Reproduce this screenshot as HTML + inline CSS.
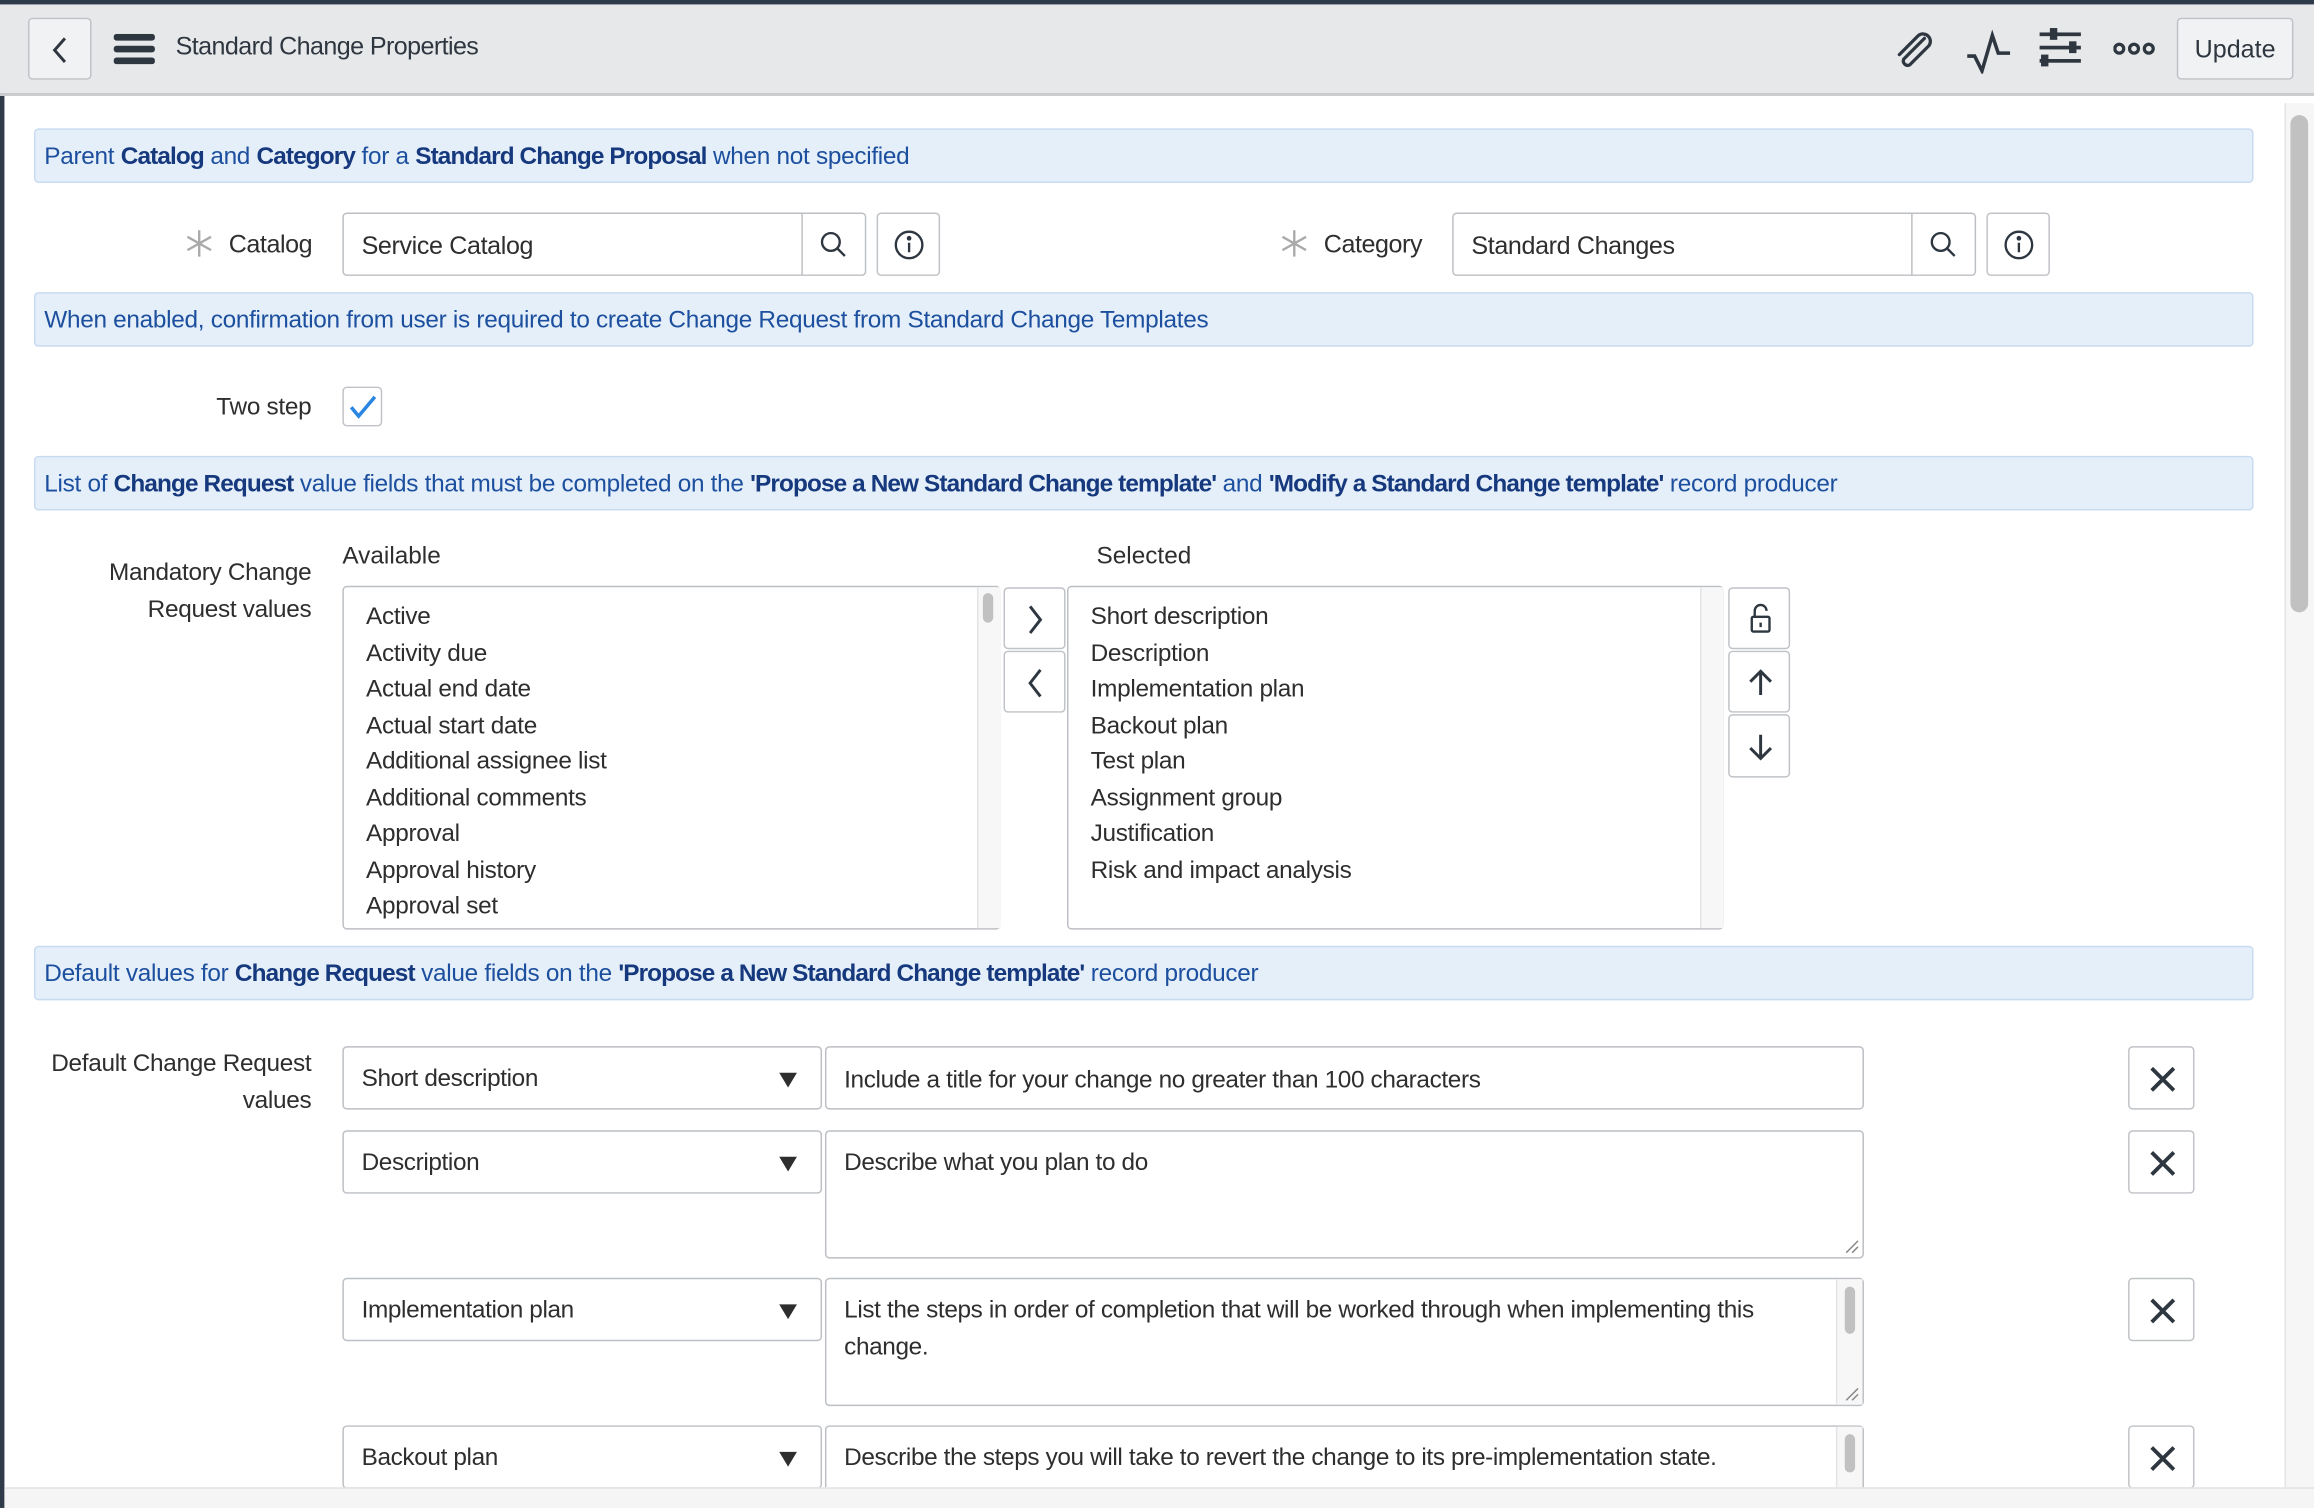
<!DOCTYPE html>
<html><head><meta charset="utf-8"><style>
html,body{margin:0;padding:0;background:#fff;overflow:hidden}
body{width:2314px;height:1508px;position:relative}
#w{position:absolute;left:0;top:0;width:1568px;height:1022px;transform:scale(1.4758,1.4755);transform-origin:0 0;font-family:"Liberation Sans",sans-serif;color:#2e2e2e;font-size:16px}
.a{position:absolute}
.hdr{left:0;top:0;width:1568px;height:65px;background:#e6e8ea;border-bottom:2px solid #c9cbce;border-top:3px solid #2f3b4a;box-sizing:border-box}
.btn{position:absolute;box-sizing:border-box;border:1px solid #bfc2c6;border-radius:3px;background:#fff}
.bar{left:23px;width:1504px;height:37px;background:#e5effa;border:1px solid #c8dbf1;border-radius:3px;box-sizing:border-box;color:#1c4f9e;font-size:16.5px;line-height:37px;padding-left:6px;letter-spacing:-0.2px;white-space:nowrap}
.bar b{color:#16397e;font-weight:bold;letter-spacing:-0.6px}
.lbl{text-align:right;width:200px;left:11px;letter-spacing:-0.2px}
.inp{position:absolute;box-sizing:border-box;border:1px solid #bcbfc3;border-radius:3px;background:#fff;letter-spacing:-0.25px}
.li{position:absolute;left:15px;letter-spacing:-0.2px}
svg{position:absolute}
.tri{position:absolute;right:16px;top:17px;width:0;height:0;border-left:6px solid transparent;border-right:6px solid transparent;border-top:10px solid #2e2e2e}
</style></head><body><div id="w">
<div class="a" style="left:0;top:0;width:3px;height:1022px;background:#2f3b4a"></div>
<div class="a hdr"></div>
<div class="btn" style="left:19px;top:12px;width:43px;height:42px;background:#f1f2f3"><svg width="43" height="42"><path d="M24 13l-7 8 7 8" fill="none" stroke="#2e3640" stroke-width="2"/></svg></div>
<svg style="left:77px;top:23px" width="28" height="21"><rect x="0" y="0" width="28" height="4.5" rx="2" fill="#2e3640"/><rect x="0" y="8" width="28" height="4.5" rx="2" fill="#2e3640"/><rect x="0" y="16" width="28" height="4.5" rx="2" fill="#2e3640"/></svg>
<div class="a" style="left:119px;top:22px;font-size:17px;letter-spacing:-0.4px;color:#2e3640">Standard Change Properties</div>
<svg style="left:1280px;top:18px" width="32" height="32" fill="none" stroke="#2e3640" stroke-width="2.2" stroke-linecap="round"><path d="M24 8L10 22a3 3 0 0 0 4 4L27 13a5 5 0 0 0-7-7L7 19"/></svg>
<svg style="left:1331px;top:18px" width="34" height="32" fill="none" stroke="#2e3640" stroke-width="2.4"><path d="M2 20h5l5 10 7-24 4 12h8"/></svg>
<svg style="left:1382px;top:18px" width="30" height="30" fill="#2e3640"><rect x="0" y="4" width="28" height="2.5"/><rect x="0" y="13" width="28" height="2.5"/><rect x="0" y="22" width="28" height="2.5"/><rect x="7" y="1" width="5" height="8"/><rect x="20" y="10" width="5" height="8"/><rect x="1" y="19" width="5" height="8"/></svg>
<svg style="left:1432px;top:27px" width="30" height="12" fill="none" stroke="#2e3640" stroke-width="2.2"><circle cx="4" cy="6" r="3"/><circle cx="14" cy="6" r="3"/><circle cx="24" cy="6" r="3"/></svg>
<div class="btn" style="left:1475px;top:12px;width:79px;height:42px;background:#f1f2f3;font-size:17px;line-height:42px;text-align:center;color:#2e3640">Update</div>
<div class="a" style="left:1548px;top:70px;width:20px;height:940px;background:#f6f6f6;border-left:1px solid #e4e4e4"></div>
<div class="a" style="left:1552px;top:78px;width:12px;height:337px;background:#c1c1c1;border-radius:6px"></div>

<div class="a bar" style="top:87px">Parent <b>Catalog</b> and <b>Category</b> for a <b>Standard Change Proposal</b> when not specified</div>
<svg style="left:126px;top:156px" width="18" height="18" stroke="#aaa" stroke-width="1.6"><path d="M9 0v18M1 4.5l16 9M1 13.5l16-9"/></svg>
<div class="a" style="left:155px;top:156px;font-size:17px;letter-spacing:-0.3px">Catalog</div>
<div class="inp" style="left:232px;top:144px;width:355px;height:43px"><span style="position:absolute;left:12px;top:12px;font-size:17px">Service Catalog</span><div class="a" style="left:310px;top:0;width:1px;height:41px;background:#bcbfc3"></div><svg style="left:322px;top:11px" width="20" height="20" fill="none" stroke="#2e3640" stroke-width="1.6"><circle cx="8" cy="8" r="6"/><path d="M12.5 12.5l5 5"/></svg></div>
<div class="btn" style="left:594px;top:144px;width:43px;height:43px"><svg style="left:10px;top:10px" width="22" height="22" fill="none" stroke="#2e3640" stroke-width="1.6"><circle cx="11" cy="11" r="9"/><path d="M11 9.5v6.5"/><circle cx="11" cy="6.5" r="0.8" fill="#2e3640"/></svg></div>
<svg style="left:868px;top:156px" width="18" height="18" stroke="#aaa" stroke-width="1.6"><path d="M9 0v18M1 4.5l16 9M1 13.5l16-9"/></svg>
<div class="a" style="left:897px;top:156px;font-size:17px;letter-spacing:-0.3px">Category</div>
<div class="inp" style="left:984px;top:144px;width:355px;height:43px"><span style="position:absolute;left:12px;top:12px;font-size:17px">Standard Changes</span><div class="a" style="left:310px;top:0;width:1px;height:41px;background:#bcbfc3"></div><svg style="left:322px;top:11px" width="20" height="20" fill="none" stroke="#2e3640" stroke-width="1.6"><circle cx="8" cy="8" r="6"/><path d="M12.5 12.5l5 5"/></svg></div>
<div class="btn" style="left:1346px;top:144px;width:43px;height:43px"><svg style="left:10px;top:10px" width="22" height="22" fill="none" stroke="#2e3640" stroke-width="1.6"><circle cx="11" cy="11" r="9"/><path d="M11 9.5v6.5"/><circle cx="11" cy="6.5" r="0.8" fill="#2e3640"/></svg></div>

<div class="a bar" style="top:198px">When enabled, confirmation from user is required to create Change Request from Standard Change Templates</div>
<div class="a lbl" style="top:267px;font-size:16.5px">Two step</div>
<div class="btn" style="left:232px;top:262px;width:27px;height:27px"><svg width="27" height="27" fill="none" stroke="#2a86e0" stroke-width="2.4"><path d="M5 13l5 6 11-13"/></svg></div>

<div class="a bar" style="top:309px">List of <b>Change Request</b> value fields that must be completed on the <b>'Propose a New Standard Change template'</b> and <b>'Modify a Standard Change template'</b> record producer</div>
<div class="a lbl" style="top:376px;line-height:24.5px;font-size:16.5px">Mandatory Change<br>Request values</div>
<div class="a" style="left:232px;top:368px;font-size:16.5px">Available</div>
<div class="a" style="left:743px;top:368px;font-size:16.5px">Selected</div>
<div class="inp" style="left:232px;top:397px;width:446px;height:233px;font-size:16.5px">
<div class="a" style="left:429px;top:0;width:15px;height:231px;background:#f7f7f7;border-left:1px solid #e4e4e4"></div>
<div class="a" style="left:433px;top:4px;width:7px;height:20px;background:#c1c1c1;border-radius:4px"></div>
<div class="li" style="top:11px">Active</div><div class="li" style="top:35.5px">Activity due</div><div class="li" style="top:60px">Actual end date</div><div class="li" style="top:84.5px">Actual start date</div><div class="li" style="top:109px">Additional assignee list</div><div class="li" style="top:133.5px">Additional comments</div><div class="li" style="top:158px">Approval</div><div class="li" style="top:182.5px">Approval history</div><div class="li" style="top:207px">Approval set</div>
</div>
<div class="btn" style="left:680px;top:398px;width:42px;height:42px"><svg width="42" height="42" fill="none" stroke="#2e3640" stroke-width="2"><path d="M17 12l7 9-7 9"/></svg></div>
<div class="btn" style="left:680px;top:441px;width:42px;height:42px"><svg width="42" height="42" fill="none" stroke="#2e3640" stroke-width="2"><path d="M24 12l-7 9 7 9"/></svg></div>
<div class="inp" style="left:723px;top:397px;width:445px;height:233px;font-size:16.5px">
<div class="a" style="left:428px;top:0;width:15px;height:231px;background:#f7f7f7;border-left:1px solid #e4e4e4"></div>
<div class="li" style="top:11px">Short description</div><div class="li" style="top:35.5px">Description</div><div class="li" style="top:60px">Implementation plan</div><div class="li" style="top:84.5px">Backout plan</div><div class="li" style="top:109px">Test plan</div><div class="li" style="top:133.5px">Assignment group</div><div class="li" style="top:158px">Justification</div><div class="li" style="top:182.5px">Risk and impact analysis</div>
</div>
<div class="btn" style="left:1171px;top:398px;width:42px;height:42px"><svg width="42" height="42" fill="none" stroke="#2e3640" stroke-width="1.6"><rect x="15" y="19" width="12" height="10" rx="1"/><path d="M17 19v-4a4 4 0 0 1 8 0"/><path d="M21 23v3"/></svg></div>
<div class="btn" style="left:1171px;top:441px;width:42px;height:42px"><svg width="42" height="42" fill="none" stroke="#2e3640" stroke-width="2"><path d="M21 29V13M14 20l7-7 7 7"/></svg></div>
<div class="btn" style="left:1171px;top:484px;width:42px;height:43px"><svg width="42" height="42" fill="none" stroke="#2e3640" stroke-width="2"><path d="M21 13v16M14 22l7 7 7-7"/></svg></div>

<div class="a bar" style="top:641px">Default values for <b>Change Request</b> value fields on the <b>'Propose a New Standard Change template'</b> record producer</div>
<div class="a lbl" style="top:709px;line-height:24.5px;font-size:16.5px">Default Change Request<br>values</div>

<div class="inp" style="left:232px;top:709px;width:325px;height:43px;font-size:16.5px"><span class="a" style="left:12px;top:12px">Short description</span><div class="tri"></div></div>
<div class="inp" style="left:559px;top:709px;width:704px;height:43px;font-size:16.5px"><span class="a" style="left:12px;top:13px">Include a title for your change no greater than 100 characters</span></div>
<div class="btn" style="left:1442px;top:709px;width:45px;height:43px"><svg width="45" height="43" stroke="#2e3640" stroke-width="2.6"><path d="M15 14l15 15M30 14L15 29"/></svg></div>

<div class="inp" style="left:232px;top:766px;width:325px;height:43px;font-size:16.5px"><span class="a" style="left:12px;top:12px">Description</span><div class="tri"></div></div>
<div class="inp" style="left:559px;top:766px;width:704px;height:87px;font-size:16.5px"><span class="a" style="left:12px;top:12px">Describe what you plan to do</span><svg style="right:2px;bottom:2px" width="10" height="10" stroke="#888"><path d="M9 1L1 9M9 5L5 9"/></svg></div>
<div class="btn" style="left:1442px;top:766px;width:45px;height:43px"><svg width="45" height="43" stroke="#2e3640" stroke-width="2.6"><path d="M15 14l15 15M30 14L15 29"/></svg></div>

<div class="inp" style="left:232px;top:866px;width:325px;height:43px;font-size:16.5px"><span class="a" style="left:12px;top:12px">Implementation plan</span><div class="tri"></div></div>
<div class="inp" style="left:559px;top:866px;width:704px;height:87px;font-size:16.5px;line-height:24.5px"><span class="a" style="left:12px;top:9px;width:660px">List the steps in order of completion that will be worked through when implementing this change.</span><div class="a" style="right:0;top:0;width:17px;height:85px;background:#f7f7f7;border-left:1px solid #e4e4e4"></div><div class="a" style="right:5px;top:5px;width:7px;height:32px;background:#c1c1c1;border-radius:4px"></div><svg style="right:2px;bottom:2px" width="10" height="10" stroke="#888"><path d="M9 1L1 9M9 5L5 9"/></svg></div>
<div class="btn" style="left:1442px;top:866px;width:45px;height:43px"><svg width="45" height="43" stroke="#2e3640" stroke-width="2.6"><path d="M15 14l15 15M30 14L15 29"/></svg></div>

<div class="inp" style="left:232px;top:966px;width:325px;height:43px;font-size:16.5px"><span class="a" style="left:12px;top:12px">Backout plan</span><div class="tri"></div></div>
<div class="inp" style="left:559px;top:966px;width:704px;height:87px;font-size:16.5px"><span class="a" style="left:12px;top:12px">Describe the steps you will take to revert the change to its pre-implementation state.</span><div class="a" style="right:0;top:0;width:17px;height:85px;background:#f7f7f7;border-left:1px solid #e4e4e4"></div><div class="a" style="right:5px;top:5px;width:7px;height:26px;background:#c1c1c1;border-radius:4px"></div></div>
<div class="btn" style="left:1442px;top:966px;width:45px;height:43px"><svg width="45" height="43" stroke="#2e3640" stroke-width="2.6"><path d="M15 14l15 15M30 14L15 29"/></svg></div>

<div class="a" style="left:3px;top:1008px;width:1565px;height:14px;background:#f5f5f5;border-top:1px solid #e2e2e2"></div>
</div></body></html>
